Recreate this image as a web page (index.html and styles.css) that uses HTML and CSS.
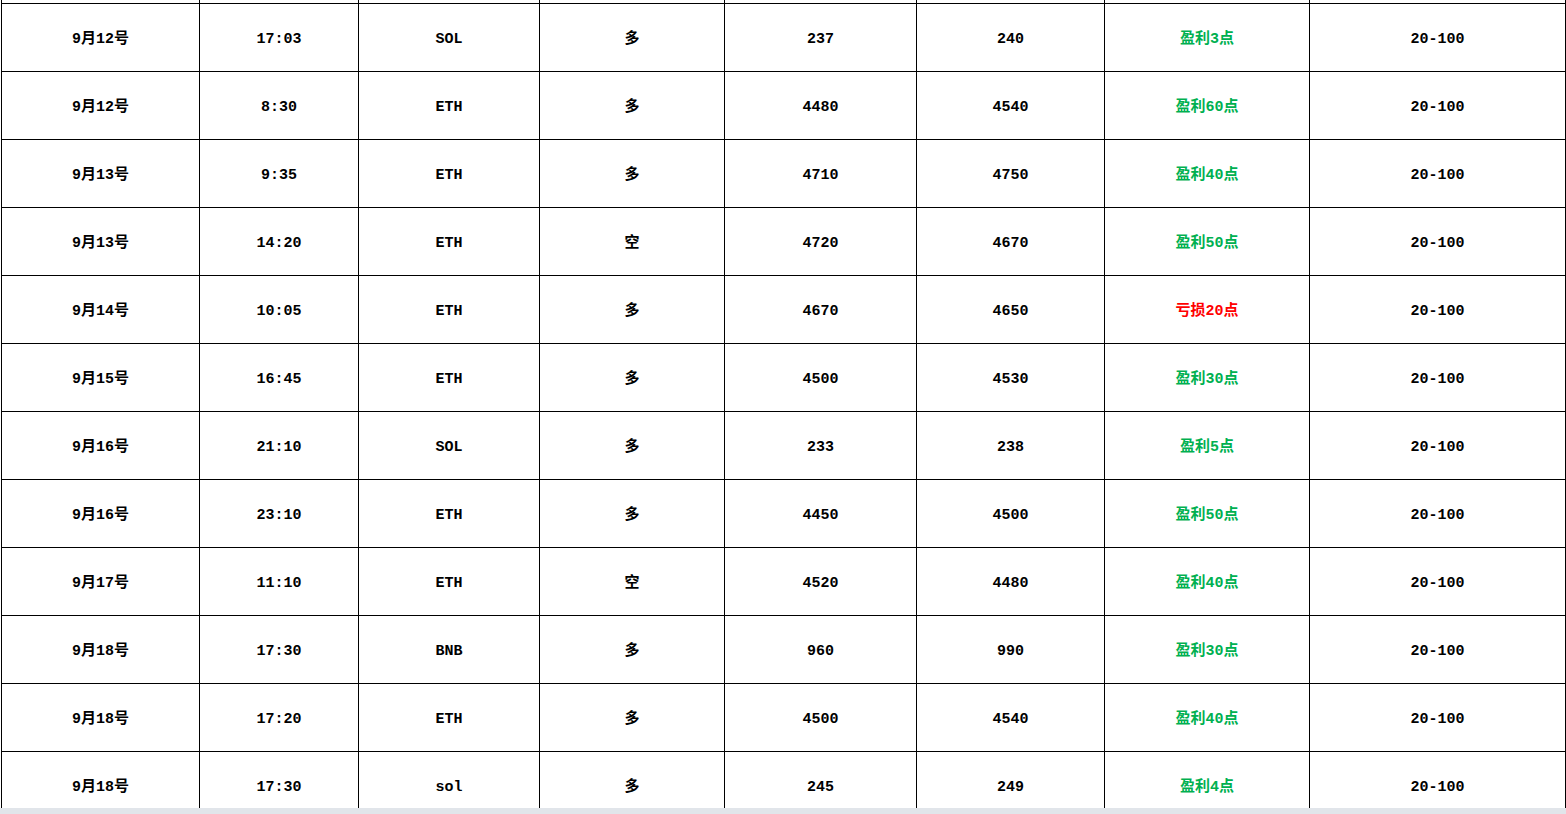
FILE: index.html
```html
<!DOCTYPE html>
<html lang="zh">
<head>
<meta charset="utf-8">
<title>交易记录</title>
<link rel="stylesheet" href="styles.css">
</head>
<body>
<div class="viewport">
<table class="trades">
<colgroup>
<col class="c1"><col class="c2"><col class="c3"><col class="c4"><col class="c5"><col class="c6"><col class="c7"><col class="c8">
</colgroup>
<tbody>
<tr class="cut"><td></td><td></td><td></td><td></td><td></td><td></td><td></td><td></td></tr>
<tr><td>9月12号</td><td>17:03</td><td>SOL</td><td>多</td><td>237</td><td>240</td><td class="win">盈利3点</td><td>20-100</td></tr>
<tr><td>9月12号</td><td>8:30</td><td>ETH</td><td>多</td><td>4480</td><td>4540</td><td class="win">盈利60点</td><td>20-100</td></tr>
<tr><td>9月13号</td><td>9:35</td><td>ETH</td><td>多</td><td>4710</td><td>4750</td><td class="win">盈利40点</td><td>20-100</td></tr>
<tr><td>9月13号</td><td>14:20</td><td>ETH</td><td>空</td><td>4720</td><td>4670</td><td class="win">盈利50点</td><td>20-100</td></tr>
<tr><td>9月14号</td><td>10:05</td><td>ETH</td><td>多</td><td>4670</td><td>4650</td><td class="loss">亏损20点</td><td>20-100</td></tr>
<tr><td>9月15号</td><td>16:45</td><td>ETH</td><td>多</td><td>4500</td><td>4530</td><td class="win">盈利30点</td><td>20-100</td></tr>
<tr><td>9月16号</td><td>21:10</td><td>SOL</td><td>多</td><td>233</td><td>238</td><td class="win">盈利5点</td><td>20-100</td></tr>
<tr><td>9月16号</td><td>23:10</td><td>ETH</td><td>多</td><td>4450</td><td>4500</td><td class="win">盈利50点</td><td>20-100</td></tr>
<tr><td>9月17号</td><td>11:10</td><td>ETH</td><td>空</td><td>4520</td><td>4480</td><td class="win">盈利40点</td><td>20-100</td></tr>
<tr><td>9月18号</td><td>17:30</td><td>BNB</td><td>多</td><td>960</td><td>990</td><td class="win">盈利30点</td><td>20-100</td></tr>
<tr><td>9月18号</td><td>17:20</td><td>ETH</td><td>多</td><td>4500</td><td>4540</td><td class="win">盈利40点</td><td>20-100</td></tr>
<tr><td>9月18号</td><td>17:30</td><td>sol</td><td>多</td><td>245</td><td>249</td><td class="win">盈利4点</td><td>20-100</td></tr>
</tbody>
</table>
</div>
<div class="scrollbar"></div>
</body>
</html>
```

FILE: styles.css
```css
html, body {
  margin: 0;
  padding: 0;
  background: #ffffff;
}

.viewport {
  height: 808px;
  overflow: hidden;
  padding-left: 1px;
}

.trades {
  border-collapse: collapse;
  table-layout: fixed;
  width: 1565px;
  font-family: "Liberation Mono", "Noto Sans CJK SC", monospace;
  font-size: 15px;
  font-weight: bold;
  color: #000000;
}

.c1 { width: 198px; }
.c2 { width: 159px; }
.c3 { width: 181px; }
.c4 { width: 185px; }
.c5 { width: 192px; }
.c6 { width: 188px; }
.c7 { width: 205px; }
.c8 { width: 256px; }

.trades td {
  border: 1px solid #000000;
  height: 68px;
  padding: 6px 0 0 0;
  box-sizing: border-box;
  text-align: center;
  vertical-align: middle;
  white-space: nowrap;
  line-height: 18px;
}

.trades tr.cut td {
  border-top: none;
  height: 3px;
  padding: 0;
  line-height: 0;
}

.trades td.win {
  color: #00b050;
}

.trades td.loss {
  color: #ff0000;
}

.scrollbar {
  height: 6px;
  background: #e1e5ea;
}
```
